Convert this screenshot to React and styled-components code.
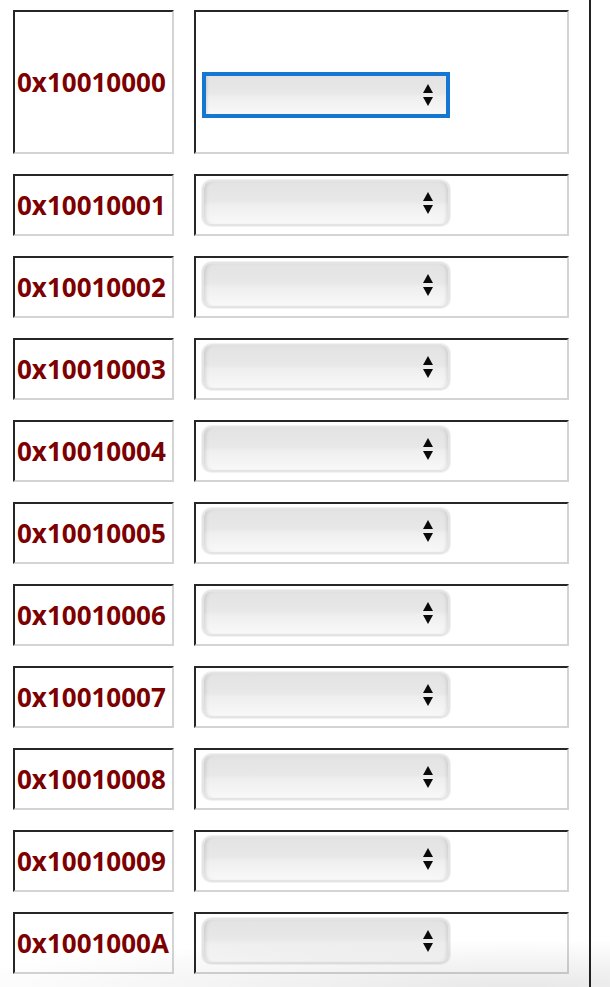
import React from "react";
import styled, { createGlobalStyle } from "styled-components";

const GlobalStyle = createGlobalStyle`
  html, body {
    margin: 0;
    padding: 0;
    background: #fff;
  }
`;

const Page = styled.div`
  position: relative;
  width: 610px;
  height: 987px;
  overflow: hidden;
  background: #fff;
`;

const Frame = styled.div`
  width: 591px;
  height: 100%;
  box-sizing: border-box;
  border-right: 2px solid #222;
`;

const Table = styled.div`
  display: flex;
  flex-direction: column;
  gap: 20px;
  padding: 10px 0 0 13px;
`;

const Row = styled.div`
  display: flex;
  gap: 20px;
`;

const Cell = styled.div`
  box-sizing: border-box;
  height: ${(p) => (p.$tall ? "144px" : "62px")};
  border-style: solid;
  border-width: 2px;
  border-color: #262626 #d4d4d4 #d4d4d4 #262626;
  background: #fff;
  display: flex;
`;

const AddressCell = styled(Cell)`
  width: 161px;
  align-items: center;
  padding-left: 2px;
  font-family: "Open Sans", "DejaVu Sans", sans-serif;
  font-weight: 700;
  font-size: 26px;
  color: #7d0000;
`;

const ValueCell = styled(Cell)`
  width: 375px;
  align-items: flex-start;
  padding: ${(p) => (p.$tall ? "60px" : "4px")} 0 0 6px;
`;

const Select = styled.div`
  box-sizing: border-box;
  width: 248px;
  height: 46px;
  border-radius: ${(p) => (p.$focused ? "0" : "9px")};
  border: ${(p) => (p.$focused ? "4px solid #1677d2" : "2px solid #e4e4e4")};
  background: linear-gradient(
    to bottom,
    #e3e3e3 0%,
    #e8e8e8 45%,
    #efefef 55%,
    #f8f8f8 100%
  );
  box-shadow: ${(p) =>
    p.$focused
      ? "inset 3px 0 3px -2px rgba(0,0,0,0.12)"
      : "inset 4px 0 4px -3px rgba(0,0,0,0.15), inset -4px 0 4px -3px rgba(0,0,0,0.12), 0 0 0 1px #f2f2f2"};
  display: flex;
  align-items: center;
  justify-content: flex-end;
  padding-right: ${(p) => (p.$focused ? "13px" : "15px")};
`;

const Arrows = styled.svg`
  width: 10px;
  height: 23px;
  display: block;
`;

const UpDown = () => (
  <Arrows viewBox="0 0 10 23">
    <polygon points="5,0 10,9 0,9" fill="#0a0a0a" />
    <polygon points="0,13 10,13 5,22" fill="#0a0a0a" />
  </Arrows>
);

const BottomShade = styled.div`
  position: absolute;
  left: 0;
  right: 0;
  bottom: 0;
  height: 60px;
  pointer-events: none;
  background: radial-gradient(
    ellipse 120% 100% at 85% 100%,
    rgba(0, 0, 0, 0.09) 0%,
    rgba(0, 0, 0, 0.04) 45%,
    rgba(0, 0, 0, 0) 80%
  );
`;

const addresses = [
  "0x10010000",
  "0x10010001",
  "0x10010002",
  "0x10010003",
  "0x10010004",
  "0x10010005",
  "0x10010006",
  "0x10010007",
  "0x10010008",
  "0x10010009",
  "0x1001000A",
];

export default function App() {
  return (
    <Page>
      <GlobalStyle />
      <Frame>
        <Table>
          {addresses.map((addr, i) => (
            <Row key={addr}>
              <AddressCell $tall={i === 0}>{addr}</AddressCell>
              <ValueCell $tall={i === 0}>
                <Select $focused={i === 0}>
                  <UpDown />
                </Select>
              </ValueCell>
            </Row>
          ))}
        </Table>
      </Frame>
      <BottomShade />
    </Page>
  );
}
